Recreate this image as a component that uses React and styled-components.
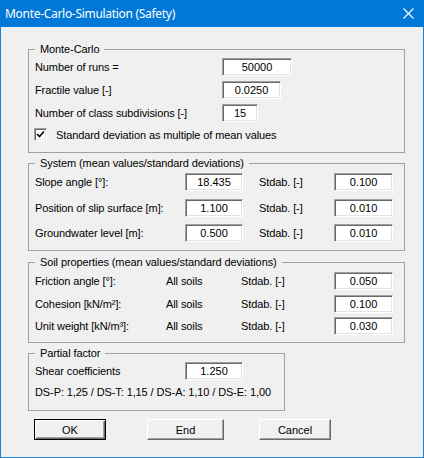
import React from 'react';
import styled, { createGlobalStyle } from 'styled-components';

const GlobalStyle = createGlobalStyle`
  html, body {
    margin: 0;
    padding: 0;
    background: #f0f0f0;
  }
  * {
    box-sizing: border-box;
  }
`;

const Window = styled.div`
  width: 424px;
  height: 458px;
  border: 1px solid #1883d7;
  border-top: none;
  background: #f0f0f0;
  display: flex;
  flex-direction: column;
  font-family: 'Liberation Sans', Arial, sans-serif;
  font-size: 11px;
  letter-spacing: -0.1px;
  color: #000;
`;

const TitleBar = styled.div`
  height: 27px;
  margin: 0 -1px;
  background: #0078d7;
  display: flex;
  align-items: center;
  justify-content: space-between;
  padding: 0 10px 1px 5px;
  color: #fff;
  font-family: 'Noto Sans', 'Open Sans', sans-serif;
  font-size: 12px;
  letter-spacing: -0.3px;
`;

const Close = styled.svg`
  width: 11px;
  height: 11px;
  margin-top: 1px;
`;

const Content = styled.div`
  flex: 1;
  display: flex;
  flex-direction: column;
  padding: 15px 0 0 27px;
`;

const Group = styled.fieldset`
  width: ${(p) => p.$width || 377}px;
  margin: ${(p) => p.$top || 0}px 0 0 0;
  padding: ${(p) => p.$pad};
  border: 1px solid #a0a0a0;
  min-width: 0;
`;

const Legend = styled.legend`
  padding: 0 5px;
  line-height: 14px;
`;

const Grid = styled.div`
  display: grid;
  grid-template-columns: ${(p) => p.$cols};
  grid-auto-rows: 18px;
  row-gap: ${(p) => p.$gap}px;
  align-items: center;
`;

const Label = styled.span`
  white-space: nowrap;
`;

const Field = styled.input`
  width: ${(p) => p.$w}px;
  height: 18px;
  background: #fff;
  border: 1px solid;
  border-color: #a0a0a0 #fff #fff #a0a0a0;
  box-shadow: inset 1px 1px 0 #696969, inset -1px -1px 0 #e3e3e3;
  padding: 0;
  margin: 0;
  font: inherit;
  letter-spacing: 0;
  text-align: center;
  color: #000;
  outline: none;
`;

const CheckRow = styled.label`
  display: flex;
  align-items: center;
  height: 13px;
  margin-top: 6px;
  margin-left: -1px;
`;

const CheckBox = styled.span`
  width: 13px;
  height: 13px;
  margin-right: 9px;
  background: #fff;
  border: 1px solid;
  border-color: #a0a0a0 #fff #fff #a0a0a0;
  box-shadow: inset 1px 1px 0 #696969, inset -1px -1px 0 #e3e3e3;
  display: flex;
  align-items: center;
  justify-content: center;
`;

const Note = styled.div`
  height: 14px;
  line-height: 14px;
  margin-top: 5px;
`;

const Buttons = styled.div`
  display: flex;
  margin-top: 8px;
  padding-left: 6px;
`;

const Button = styled.button`
  width: ${(p) => p.$w}px;
  height: 21px;
  margin: 0 ${(p) => p.$gap || 0}px 0 0;
  padding: 0;
  font: inherit;
  letter-spacing: 0;
  color: #000;
  background: #f0f0f0;
  border: 1px solid;
  border-color: ${(p) => (p.$default ? '#000' : '#fff #696969 #696969 #fff')};
  box-shadow: ${(p) =>
    p.$default
      ? 'inset 1px 1px 0 #fff, inset -1px -1px 0 #696969, inset -2px -2px 0 #a0a0a0'
      : 'inset -1px -1px 0 #a0a0a0'};
`;

const systemRows = [
  ['Slope angle [°]:', '18.435', '0.100'],
  ['Position of slip surface [m]:', '1.100', '0.010'],
  ['Groundwater level [m]:', '0.500', '0.010'],
];

const soilRows = [
  ['Friction angle [°]:', '0.050'],
  ['Cohesion [kN/m²]:', '0.100'],
  ['Unit weight [kN/m³]:', '0.030'],
];

const App = () => {
  return (
    <>
      <GlobalStyle />
      <Window>
        <TitleBar>
          <span>Monte-Carlo-Simulation (Safety)</span>
          <Close viewBox='0 0 11 11'>
            <path d='M0.5 0.5 L10.5 10.5 M10.5 0.5 L0.5 10.5' stroke='#fff' strokeWidth='1.1' />
          </Close>
        </TitleBar>
        <Content>
          <Group $pad='2px 6px 11px 6px'>
            <Legend>Monte-Carlo</Legend>
            <Grid $cols='187px auto' $gap={5}>
              <Label>Number of runs =</Label>
              <Field $w={70} readOnly value='50000' />
              <Label>Fractile value [-]</Label>
              <Field $w={59} readOnly value='0.0250' />
              <Label>Number of class subdivisions [-]</Label>
              <Field $w={36} readOnly value='15' />
            </Grid>
            <CheckRow>
              <CheckBox>
                <svg width='9' height='9' viewBox='0 0 9 9'>
                  <path d='M1 4 L3.5 6.5 L8 1.5' stroke='#000' strokeWidth='1.6' fill='none' />
                </svg>
              </CheckBox>
              Standard deviation as multiple of mean values
            </CheckRow>
          </Group>

          <Group $top={3} $pad='3px 6px 8px 6px'>
            <Legend>System (mean values/standard deviations)</Legend>
            <Grid $cols='150px 58px 16px 75px 59px' $gap={7.5}>
              {systemRows.map(([label, value, dev]) => (
                <React.Fragment key={label}>
                  <Label>{label}</Label>
                  <Field $w={58} readOnly value={value} />
                  <span />
                  <Label>Stdab. [-]</Label>
                  <Field $w={59} readOnly value={dev} />
                </React.Fragment>
              ))}
            </Grid>
          </Group>

          <Group $top={4} $pad='3px 6px 7px 6px'>
            <Legend>Soil properties (mean values/standard deviations)</Legend>
            <Grid $cols='131px 75px 93px 59px' $gap={4.5}>
              {soilRows.map(([label, dev]) => (
                <React.Fragment key={label}>
                  <Label>{label}</Label>
                  <Label>All soils</Label>
                  <Label>Stdab. [-]</Label>
                  <Field $w={59} readOnly value={dev} />
                </React.Fragment>
              ))}
            </Grid>
          </Group>

          <Group $top={3} $width={257} $pad='2px 6px 11px 6px'>
            <Legend>Partial factor</Legend>
            <Grid $cols='150px 58px' $gap={0}>
              <Label>Shear coefficients</Label>
              <Field $w={58} readOnly value='1.250' />
            </Grid>
            <Note>DS-P: 1,25 / DS-T: 1,15 / DS-A: 1,10 / DS-E: 1,00</Note>
          </Group>

          <Buttons>
            <Button $w={72} $gap={41} $default>OK</Button>
            <Button $w={77} $gap={35}>End</Button>
            <Button $w={72}>Cancel</Button>
          </Buttons>
        </Content>
      </Window>
    </>
  );
};

export default App;
